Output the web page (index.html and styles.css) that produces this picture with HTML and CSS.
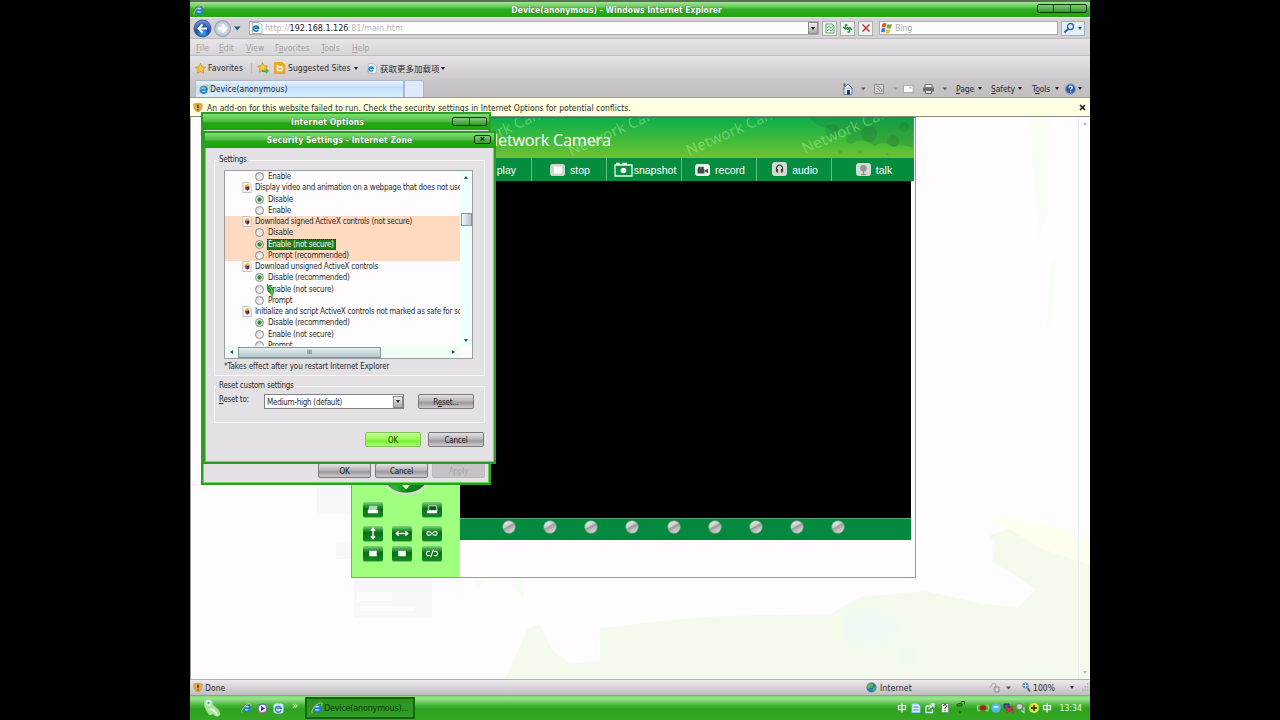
FILE: index.html
```html
<!DOCTYPE html>
<html lang="en">
<head>
<meta charset="UTF-8">
<title>Device(anonymous) - Windows Internet Explorer</title>
<link rel="stylesheet" href="styles.css">
</head>
<body>
<svg class="defs" width="0" height="0">
    <defs>
        <radialGradient id="blueBall" cx=".5" cy=".75" r=".7"><stop offset="0" stop-color="#39b4f0"/><stop offset=".5" stop-color="#1c50b0"/><stop offset="1" stop-color="#6f94d2"/></radialGradient>
        <radialGradient id="greyBall" cx=".5" cy=".5" r=".6"><stop offset="0" stop-color="#fafcff"/><stop offset="1" stop-color="#9fb0c4"/></radialGradient>
        <linearGradient id="knob" x1="0" y1="0" x2=".6" y2="1"><stop offset="0" stop-color="#f2f2f2"/><stop offset=".45" stop-color="#d0d0d0"/><stop offset=".55" stop-color="#a5a5a5"/><stop offset="1" stop-color="#d8d8d8"/></linearGradient>
        <linearGradient id="wheel" x1="0" y1="0" x2="1" y2="0"><stop offset="0" stop-color="#0b6b14"/><stop offset=".3" stop-color="#35b53a"/><stop offset=".5" stop-color="#118a20"/><stop offset="1" stop-color="#0a6312"/></linearGradient>
    </defs>
    <symbol id="ie" viewBox="0 0 12 12">
        <path d="M9.600 7.800a3.600 3.600 0 1 1 .2-2.600L9.600 6.300H4" fill="#bfe6f6" stroke="#1f7fcb" stroke-width="2"/>
        <path d="M1.200 11C-.6 9 5 1.500 9.500.8c2-.2 1.700 1.600.8 3" fill="none" stroke="#e3c04a" stroke-width="1"/>
    </symbol>
    <symbol id="iepage" viewBox="0 0 12 12">
        <path d="M1.500.5H8l3 3v8H1.500z" fill="#fff" stroke="#97a0a8" stroke-width=".8"/>
        <path d="M7.400 7.700a2.600 2.600 0 1 1 .2-1.600H3.500" fill="none" stroke="#1a77b4" stroke-width="1.600"/>
        <path d="M1 9.500C1 7 5 3 8.600 3" fill="none" stroke="#4aa7cf" stroke-width=".8"/>
    </symbol>
    <symbol id="star" viewBox="0 0 12 12"><path d="M6 .5l1.600 3.700 4 .4-3 2.700.9 4L6 9.200l-3.500 2.100.9-4-3-2.700 4-.4z" fill="#f9c63c" stroke="#c98a1d" stroke-width=".8"/></symbol>
    <symbol id="shield" viewBox="0 0 12 12">
        <path d="M6 .5c2 1 3.500 1 5 1C11.800 7 9.500 10 6 11.500 2.500 10 .2 7 1 1.500c1.500 0 3 0 5-1z" fill="#e4ad4c" stroke="#a87b38" stroke-width=".6"/>
        <path d="M6 2.500v4.500M6 8v1.700" stroke="#5d3608" stroke-width="1.800"/>
    </symbol>
    <symbol id="doc" viewBox="0 0 10 12">
        <path d="M.5.500H7l2.500 2.500v8.500H.5z" fill="#fffdf5" stroke="#a9a9a9" stroke-width=".8"/>
        <path d="M2.500 3.500l4-1.500 1 3-4 1.500z" fill="#e8b93c"/><path d="M2.500 5.500l2.500-.5 1 4.500-2.500-1z" fill="#b3344a"/><path d="M5 5.500l2.500-1V8L5.500 9.500z" fill="#2b2350"/>
    </symbol>
    <symbol id="knobIcon" viewBox="0 0 14 14"><circle cx="7" cy="7" r="6.300" fill="url(#knob)" stroke="#6f9f80" stroke-width=".6"/><path d="M2.500 9l9-4" stroke="#9a9a9a" stroke-width="1.300"/></symbol>
    <symbol id="zhong" viewBox="0 0 10 10"><path d="M1.500 2.700h7v3.800h-7zM5 .5v9" fill="none" stroke="#e6f3ff" stroke-width="1.300"/></symbol>
</svg>

<div class="screen">
    <div class="titlebar">
        <svg class="title-icon" width="12" height="12"><use href="#ie"/></svg>
        <span>Device(anonymous) - Windows Internet Explorer</span>
        <div class="win-buttons"><i></i><i></i><i></i></div>
    </div>

    <div class="nav">
        <svg width="55" height="19" viewBox="0 0 55 19">
            <circle cx="9.500" cy="9.500" r="8.500" fill="url(#blueBall)" stroke="#34497d" stroke-width=".8"/>
            <path d="M14 9.500H6M9.500 5.500l-4 4 4 4" fill="none" stroke="#fff" stroke-width="2"/>
            <circle cx="29.500" cy="9.500" r="8" fill="url(#greyBall)" stroke="#8a95a5" stroke-width=".8"/>
            <path d="M25 9.500h8M29.500 5.500l4 4-4 4" fill="none" stroke="#fff" stroke-width="2"/>
            <path d="M41 7.500h6.500l-3.200 4z" fill="#1e5d91"/>
        </svg>
        <div class="address">
            <svg width="12" height="12"><use href="#iepage"/></svg>
            <span>http://<b>192.168.1.126</b>:81/main.htm</span>
            <i class="drop"></i>
        </div>
        <div class="nav-btn"><svg width="10" height="11"><path d="M1 1h6l2 2v7H1zM2 5l2-1.500L6 5l2-1.500M2 8l2-1.500L6 8l2-1.500" fill="none" stroke="#57a964"/></svg></div>
        <div class="nav-btn"><svg width="11" height="11"><path d="M5.500 2H3.500v4M1 4l2.500 2L6 4M5.500 9h2V5M5 7l2.500-2.500L10 7" fill="none" stroke="#23933a" stroke-width="1.300"/></svg></div>
        <div class="nav-btn"><svg width="10" height="10"><path d="M1.500 1.500l7 7M8.500 1.500l-7 7" stroke="#c4343c" stroke-width="1.500"/></svg></div>
        <div class="search">
            <svg width="12" height="12"><path d="M1.500 1.500q2.500-1 4 0L4.500 5.500q-2-1-4 0z" fill="#d9572b"/><path d="M6.500 2q2 1 4.500 0l-1 4q-2.500 1-4.500 0z" fill="#69ab3c"/><path d="M.5 6.500q2-1 4 0l-1 4q-2-1-3.500 0z" fill="#3f7fcb"/><path d="M5.500 7q2 1 4 0l-1 4q-2 1-4 0z" fill="#f0bd35"/></svg>
            <span>Bing</span>
        </div>
        <div class="search-btn"><svg width="14" height="12"><circle cx="8.500" cy="4.500" r="3" fill="#e5f2ff" stroke="#2c5eaa" stroke-width="1.300"/><path d="M6.200 7L2.500 10.500" stroke="#2c5eaa" stroke-width="1.800"/></svg><i class="caret"></i></div>
    </div>

    <div class="menubar">
        <span class="m1"><u>F</u>ile</span><span class="m2"><u>E</u>dit</span><span class="m3"><u>V</u>iew</span><span class="m4">F<u>a</u>vorites</span><span class="m5"><u>T</u>ools</span><span><u>H</u>elp</span>
    </div>

    <div class="favbar">
        <svg width="11" height="11"><use href="#star"/></svg>
        <span class="fav-label">Favorites</span>
        <svg class="add-fav" width="12" height="12" viewBox="0 0 12 12"><use href="#star" width="11" height="11"/><path d="M5 8.200h4V6l3 3-3 3v-2H5z" fill="#43b53c"/></svg>
        <svg class="bing" width="12" height="12" viewBox="0 0 12 12"><path d="M0 0h8l3.500 3v9H0z" fill="#f2a521"/><path d="M3.500 3v5.500h4q2-2 0-3.500H3.500" fill="none" stroke="#fff" stroke-width="1.600"/></svg>
        <span class="sug-label">Suggested Sites</span><i class="caret"></i>
        <svg class="page-ico" width="10" height="11"><use href="#iepage"/></svg>
        <span class="cjk">获取更多加载项</span><i class="caret"></i>
    </div>

    <div class="tabrow">
        <div class="tab"><svg width="11" height="11"><use href="#ie"/></svg><span>Device(anonymous)</span></div>
        <div class="newtab"></div>
        <div class="commands">
            <svg width="115" height="14" viewBox="0 0 115 14">
                <path d="M1.500 7L7 2l5 5M3 6v6.500h8V6" fill="#dfeafc" stroke="#657fb0"/><path d="M2.500 1.500h2v3h-2z" fill="#47679c"/><path d="M6 8h3v4.500H6z" fill="#23375f"/>
                <path d="M20 5.500h4.500l-2.200 2.700z" fill="#555"/>
                <path d="M33.500 2.500h9v9h-9z" fill="#d6d6d6" stroke="#8a8a8a"/><path d="M35.500 9.500h1M35.500 6.500q3 0 3.500 3.200M35.500 4.200q5 .3 5.500 5.500" fill="none" stroke="#828282"/>
                <path d="M52.500 5.500H57l-2.200 2.700z" fill="#999"/>
                <path d="M62.500 3.500h9.500v7h-9.500z" fill="#fafafa" stroke="#adadad"/><path d="M68.500 5h2v1.500h-2z" fill="#d2a0a0"/>
                <path d="M84 2.500h7v3h-7z" fill="#eee" stroke="#777"/><path d="M82 5.500h11v4H82z" fill="#717171"/><path d="M84.500 8.500h6v3h-6z" fill="#ddd" stroke="#666"/>
                <path d="M101.500 5.500h4.500l-2.200 2.700z" fill="#555"/>
            </svg>
            <span class="c1"><u>P</u>age</span><i class="caret"></i>
            <span class="c2"><u>S</u>afety</span><i class="caret"></i>
            <span class="c3">T<u>o</u>ols</span><i class="caret"></i>
            <svg class="help" width="11" height="12"><circle cx="5.500" cy="6" r="5" fill="#315caa" stroke="#8097c2"/><path d="M3.800 4.600q.2-1.500 1.800-1.500t1.700 1.400q0 .8-1.700 1.700v1M5.600 8.300v1.300" fill="none" stroke="#fff" stroke-width="1.200"/></svg><i class="caret"></i>
        </div>
    </div>

    <div class="infobar">
        <svg width="10" height="11"><use href="#shield"/></svg>
        <span>An add-on for this website failed to run. Check the security settings in Internet Options for potential conflicts.</span>
        <svg class="close" width="7" height="7"><path d="M1 1l5 5M6 1L1 6" stroke="#111" stroke-width="1.500"/></svg>
    </div>

    <div class="content">
        <!-- faint landscape behind the page -->
        <svg class="landscape" width="899" height="562" viewBox="191 117 899 562">
            <path d="M505 679L516 655 528 628 540 624 552 650 570 664 600 660 600 628 682 619 720 616 830 614 860 597 925 591 985 604 1018 607 1036 590 1010 572 992 562 994 545 990 535 1010 528 1090 548 1090 679z" fill="#f4fbec"/>
            <ellipse cx="870" cy="627" rx="28" ry="20" fill="#f0faf2"/><circle cx="908" cy="656" r="8" fill="#effaf1"/>
            <path d="M985 514L1040 524 1090 538 1090 565 1040 548z" fill="#fdfeee"/>
            <path d="M486 541L492 541 488 575 478 590 470 568zM515 541L522 541 524 600 512 585z" fill="#f8fdf3"/>
            <path d="M1030 117h20l-3 95-8 28zM1050 260h6l-5 70h-4z" fill="#f9fdf5"/>
            <path d="M317 486h34v28h-34zM336 543h16v16h-16zM354 579h78v39h-78z" fill="#f8f6f8"/>
            <path d="M357 592h35v9h-35zM360 606h55v5h-55z" fill="#fdfbfd"/>
        </svg>
        <div class="camera">
            <svg class="banner" width="562" height="40" viewBox="0 0 562 40">
                <path d="M458 0h103v30q-12-5-19-1-11-7-19-1-11-8-19-5 0-8-11-10-12 2-16-3-14-1-19-10z" fill="#23823a" opacity=".35"/>
                <g fill="#155f28" opacity=".2"><circle cx="480" cy="13" r="7"/><circle cx="499" cy="21" r="5"/><circle cx="517" cy="16" r="8"/><circle cx="541" cy="23" r="6"/><circle cx="552" cy="9" r="5"/><circle cx="489" cy="34" r="2"/><circle cx="508" cy="34" r="2"/><circle cx="535" cy="36" r="1.500"/></g>
                <g class="watermark">
                    <text transform="translate(105 38) rotate(-24)">Network Camera</text>
                    <text transform="translate(219 38) rotate(-24)">Network Camera</text>
                    <text transform="translate(337 38) rotate(-24)">Network Camera</text>
                    <text transform="translate(453 36) rotate(-24)">Network Camera</text>
                </g>
                <text class="brand" x="134" y="28">Network Camera</text>
            </svg>
            <div class="toolbar">
                <div class="tool play"><span>play</span></div>
                <div class="tool"><svg width="15" height="12"><rect width="15" height="12" rx="2.500" fill="#d1d6cf"/><path d="M4 2.500h8v7H4z" fill="#fff"/></svg><span>stop</span></div>
                <div class="tool snap"><svg width="19" height="15"><path d="M1 3h17v11H1zM2 1.500h4M8 1.500h5" fill="none" stroke="#e7fff0" stroke-width="1.300"/><circle cx="9.500" cy="8.500" r="2.800" fill="#fff"/></svg><span>snapshot</span></div>
                <div class="tool"><svg width="15" height="12"><rect width="15" height="12" rx="3" fill="#f0f5ef"/><path d="M2.500 5h7v4.500h-7zM10 6.500l3-1.800v4.600l-3-1.800z" fill="#444c46"/><circle cx="4.500" cy="4" r="1.500" fill="#444c46"/><circle cx="7.500" cy="4" r="1.500" fill="#444c46"/></svg><span>record</span></div>
                <div class="tool"><svg width="15" height="15"><rect width="15" height="14" rx="3" fill="#d5d8d3"/><path d="M4.500 9.500V6q.5-3 3-3t3 3v3.500" fill="none" stroke="#393d39" stroke-width="1.200"/><path d="M5.300 7v3.500M9.700 7v3.500" stroke="#393d39" stroke-width="1.600"/></svg><span>audio</span></div>
                <div class="tool talk"><svg width="15" height="13"><rect width="15" height="13" rx="3" fill="#d5dbd5"/><circle cx="7.500" cy="5.300" r="3.300" fill="#929792"/><path d="M7.500 7v4M5 11.500h5" stroke="#929792" stroke-width="1.300"/></svg><span>talk</span></div>
            </div>
            <div class="main">
                <div class="ptz">
                    <svg class="wheel" width="56" height="56"><circle cx="28" cy="28" r="27" fill="url(#wheel)" stroke="#d4ddd0" stroke-width="2.500"/><path d="M23.500 45.500h9L28 50.500z" fill="#fff3c8"/></svg>
                    <div class="pads">
                        <svg viewBox="0 0 20 16"><path d="M4.500 8.500h11v3.500h-11z" fill="#fff"/><path d="M6 4h9l-1 4.500H5z" fill="#b4d4b4"/></svg>
                        <i></i>
                        <svg viewBox="0 0 20 16"><path d="M4.500 9h11v3h-11z" fill="#fff"/><path d="M6.500 4h8l1 5h-9z" fill="#1d4c24" stroke="#d4efd4"/></svg>
                        <svg viewBox="0 0 20 16"><path d="M10 3v10M7.800 5L10 2.500 12.200 5M7.800 11L10 13.500l2.200-2.500" fill="none" stroke="#fff" stroke-width="1.500"/></svg>
                        <svg viewBox="0 0 20 16"><path d="M4 8h12M6.500 5.500L4 8l2.500 2.500M13.500 5.500L16 8l-2.500 2.500" fill="none" stroke="#fff" stroke-width="1.500"/></svg>
                        <svg viewBox="0 0 20 16"><path d="M9.500 8q-1-2-3-2t-2 2 2 2 3-2h1q1-2 3-2t2 2-2 2-3-2" fill="none" stroke="#e4ffe4" stroke-width="1.300"/></svg>
                        <svg viewBox="0 0 20 16"><path d="M6 5h8v6H6z" fill="#fff"/></svg>
                        <svg viewBox="0 0 20 16"><path d="M6 5h8v6H6z" fill="#fff"/></svg>
                        <svg viewBox="0 0 20 16"><path d="M8 6q-4-1-4 2t4 2M8.500 12l3-8M12 6q4-1 4 2t-4 2" fill="none" stroke="#e4ffe4" stroke-width="1.300"/></svg>
                    </div>
                </div>
                <div class="view">
                    <div class="video"></div>
                    <div class="presets">
                        <svg><use href="#knobIcon"/></svg><svg><use href="#knobIcon"/></svg><svg><use href="#knobIcon"/></svg><svg><use href="#knobIcon"/></svg><svg><use href="#knobIcon"/></svg><svg><use href="#knobIcon"/></svg><svg><use href="#knobIcon"/></svg><svg><use href="#knobIcon"/></svg><svg><use href="#knobIcon"/></svg>
                    </div>
                </div>
            </div>
        </div>
        <div class="page-scroll"><i class="up"></i><i class="down"></i></div>
    </div>

    <div class="statusbar">
        <svg width="10" height="11"><use href="#shield"/></svg>
        <span class="done">Done</span>
        <svg width="11" height="11"><circle cx="5.500" cy="5.500" r="5" fill="#2b7fb0"/><path d="M3 1.500q3-1 4 1T5 5.500 2 7 .8 4.500zM7 6l3-1q0 3-2.500 4.500z" fill="#62b755"/></svg>
        <span class="zone">Internet</span>
        <svg class="lock" width="24" height="11"><path d="M1 6q2-5 4-5t2 3L4 7" fill="none" stroke="#a6a6a6"/><path d="M6 5h4v5H6z" fill="#ddd" stroke="#888"/><path d="M17 4.500h5L19.500 7.500z" fill="#555"/></svg>
        <svg class="mag" width="10" height="11"><circle cx="3.500" cy="3.500" r="3" fill="#4a8ed0"/><path d="M3.500 1.500v4M1.500 3.500h4" stroke="#fff"/><path d="M5.500 6L8 9.500" stroke="#555" stroke-width="1.500"/></svg>
        <span class="pct">100%</span><i class="caret"></i>
        <svg class="grip" width="9" height="9"><path d="M7 1h1.500M4.500 4H6M7 4h1.500M2 7h1.500M4.500 7H6M7 7h1.500" stroke="#b0b0b0" stroke-width="1.500"/></svg>
    </div>

    <div class="taskbar">
        <svg class="start" width="22" height="21"><path d="M3 5q0-4 5-4 4 1 4 6l5 4q4 5 1 7-3 2-6-2-4 3-5-1-4-5-4-10z" fill="#a8e29b"/><circle cx="7.500" cy="5" r="3" fill="#d4f3e8"/><circle cx="7.500" cy="5" r="1.200" fill="#4caf6a"/><path d="M9 11q5 1 7 6" fill="none" stroke="#e2f8dc" stroke-width="2"/></svg>
        <svg width="11" height="12"><use href="#ie"/></svg>
        <svg width="11" height="11"><circle cx="5.500" cy="5.500" r="4.500" fill="#f4f4ff" stroke="#6672b4" stroke-width="1.500"/><path d="M4 3l4 2.500L4 8z" fill="#323b9a"/><path d="M1.500 9q3 2 6 0" stroke="#db6b3a" fill="none"/></svg>
        <svg width="11" height="11"><rect x=".5" y=".5" width="10" height="10" rx="3" fill="#d2ebfa"/><path d="M8 7.500a3 3 0 1 1 .2-2.200H3.500" fill="none" stroke="#3a86c2" stroke-width="1.500"/></svg>
        <span class="more">»</span>
        <div class="task"><svg width="12" height="12"><use href="#ie"/></svg><span>Device(anonymous)...</span></div>
        <div class="tray">
            <svg width="170" height="14" viewBox="0 0 170 14">
                <use href="#zhong" x="0" y="2" width="10" height="10"/>
                <path d="M15 3h6l2 2v6.500h-8z" fill="#e5f1ff" stroke="#8ac5ff"/><path d="M16.500 6h5M16.500 9h5" stroke="#3a76aa"/>
                <path d="M29 5h5M29 5v6.500h6.500V8" fill="none" stroke="#d9f1ff" stroke-width="1.300"/><path d="M31.500 8.500L37 3M33.500 3H37v3.500" stroke="#d9f1ff" stroke-width="1.300" fill="none"/>
                <path d="M44.500 2.500h7v9h-7z" fill="#fafff2" stroke="#7b8a72"/><path d="M46.500 5q.2-1.500 1.500-1.500t1.500 1.300T48 7v1M48 9v1.300" fill="none" stroke="#222"/>
                <path d="M61.500 2.500h3v-2h3v3M60 3h5v2h-5z" fill="none" stroke="#1d4d12" stroke-width=".9"/><path d="M61.500 10.500h3L63 12z" fill="#143d0d"/>
                <path d="M81.500 3.500q-2.500 3.500 0 7M90.500 3.500q2.500 3.500 0 7" fill="none" stroke="#a7efa0"/><path d="M82 4h8v6h-8z" fill="#39d541"/><ellipse cx="86" cy="7" rx="3.500" ry="2.800" fill="#b31c1c"/>
                <circle cx="99" cy="7" r="4.800" fill="#5ab4ec"/><path d="M96 6q3-3 6 0-3 2-6 0z" fill="#d4f0ff"/>
                <path d="M107 3h5v4h-5zM110 6h5v4h-5z" fill="#4f5791" stroke="#28306a"/><path d="M109 6l8 6M116 5l-7 7" stroke="#d13a3e" stroke-width="2"/>
                <circle cx="122.500" cy="5.500" r="3.200" fill="#ccc" stroke="#6d7d6c"/><path d="M124 9.500l3 2V6" fill="none" stroke="#bfd0bb" stroke-width="1.300"/>
                <circle cx="137" cy="7" r="5" fill="#e9e739"/><path d="M137 4v6M134 7h6" stroke="#393f0a" stroke-width="1.800"/>
                <use href="#zhong" x="145" y="2" width="10" height="10"/>
            </svg>
            <span>13:34</span>
        </div>
    </div>

    <div class="dialog options">
        <div class="dialog-title"><span>Internet Options</span><div class="win-buttons"><i></i><i></i></div></div>
        <div class="dialog-foot"><button>OK</button><button>Cancel</button><button class="disabled">Apply</button></div>
    </div>

    <div class="dialog security">
        <div class="dialog-title"><span>Security Settings - Internet Zone</span><div class="win-buttons x"><i>×</i></div></div>
        <fieldset class="settings">
            <legend>Settings</legend>
            <div class="listbox">
                <div class="list-row">
                    <ul class="list">
                        <li><i></i>Enable</li>
                        <li class="head"><svg><use href="#doc"/></svg>Display video and animation on a webpage that does not use</li>
                        <li><i class="on"></i>Disable</li>
                        <li><i></i>Enable</li>
                        <li class="head hot"><svg><use href="#doc"/></svg>Download signed ActiveX controls (not secure)</li>
                        <li class="hot"><i></i>Disable</li>
                        <li class="hot"><i class="on"></i><span class="selected">Enable (not secure)</span></li>
                        <li class="hot"><i></i>Prompt (recommended)</li>
                        <li class="head"><svg><use href="#doc"/></svg>Download unsigned ActiveX controls</li>
                        <li><i class="on"></i>Disable (recommended)</li>
                        <li><i></i>Enable (not secure)</li>
                        <li><i></i>Prompt</li>
                        <li class="head"><svg><use href="#doc"/></svg>Initialize and script ActiveX controls not marked as safe for sc</li>
                        <li><i class="on"></i>Disable (recommended)</li>
                        <li><i></i>Enable (not secure)</li>
                        <li><i></i>Prompt</li>
                    </ul>
                    <div class="vscroll"><i class="up"></i><b></b><i class="down"></i></div>
                </div>
                <div class="hscroll"><i class="left"></i><b>III</b><i class="right"></i></div>
            </div>
            <p>*Takes effect after you restart Internet Explorer</p>
        </fieldset>
        <fieldset class="reset">
            <legend>Reset custom settings</legend>
            <label><u>R</u>eset to:</label>
            <div class="select"><span>Medium-high (default)</span><i class="drop"></i></div>
            <button>R<u>e</u>set...</button>
        </fieldset>
        <div class="dialog-foot"><button class="primary">OK</button><button>Cancel</button></div>
    </div>

    <svg class="cursor" width="10" height="16"><path d="M1 1q8 3 7 8 0 3-2 6Q5 10 2 9 0 5 1 1z" fill="#2c9a34"/><path d="M2 2q5 4 4 11" stroke="#84d472" fill="none"/></svg>
</div>
</body>
</html>
```

FILE: styles.css
```css
* {
    box-sizing: border-box;
}
body {
    margin: 0;
    background-color: #000;
    font-family: "DejaVu Sans Condensed", "Noto Sans", sans-serif;
    font-size: 8px;
    letter-spacing: -0.25px;
    color: #2c2c2c;
    overflow: hidden;
}
svg {
    display: block;
    flex: none;
}
span, label, p {
    white-space: nowrap;
}
.defs {
    position: absolute;
}
.screen {
    position: relative;
    display: flex;
    flex-direction: column;
    width: 900px;
    height: 720px;
    margin: 0 auto;
    background-color: #dddbdd;
}

/* title bar */
.titlebar {
    height: 17px;
    display: flex;
    align-items: center;
    padding: 0 3px;
    border-top: 2px solid #587052;
    background: linear-gradient(#9ee693 0, #6dcc60 30%, #2fae20 50%, #20a50f 100%);
    color: #fff;
    font-size: 8.5px;
    font-weight: bold;
    letter-spacing: 0.02px;
    text-shadow: 0 0 1px #195c10;
}
.titlebar span {
    flex: 1;
    text-align: center;
    padding-right: 9px;
}
.win-buttons {
    display: flex;
    width: 50px;
    height: 9px;
    margin-top: -2px;
    border: 1px solid #083a05;
    border-radius: 2px;
    background: linear-gradient(#83cb77, #319c28);
}
.win-buttons i {
    flex: 1;
    border-left: 1px solid #16550f;
}
.win-buttons i:first-child {
    border-left: none;
}

/* navigation */
.nav {
    height: 22px;
    display: flex;
    align-items: center;
    padding: 0 4px 0 3px;
    border-top: 1px solid #f2fff0;
    border-bottom: 1px solid #bbb9bb;
    background-color: #d4d2d4;
}
.address {
    display: flex;
    align-items: center;
    width: 570px;
    height: 14px;
    margin-left: 1px;
    padding-left: 1px;
    background-color: #fff;
    border: 1px solid #aaa;
    font-size: 9px;
    letter-spacing: -0.03px;
    color: #b5b3b5;
}
.address span {
    flex: 1;
    padding-left: 2px;
}
.address b {
    color: #222;
    font-weight: normal;
}
.drop {
    width: 10px;
    height: 12px;
    border: 1px solid #8b8b8b;
    background: linear-gradient(#eee, #aaa);
    display: flex;
    align-items: center;
    justify-content: center;
}
.drop::after,
.caret {
    content: "";
    width: 0;
    height: 0;
    flex: none;
    border: 2px solid transparent;
    border-top: 3px solid #222;
    border-bottom: none;
}
.nav-btn {
    width: 15px;
    height: 15px;
    margin-left: 3px;
    display: flex;
    align-items: center;
    justify-content: center;
    border: 1px solid #aab0ac;
    background-color: #f1f3f1;
}
.address + .nav-btn {
    margin-left: 3px;
}
.search {
    display: flex;
    align-items: center;
    width: 179px;
    height: 14px;
    margin-left: 6px;
    padding-left: 1px;
    border: 1px solid #aaa;
    background-color: #fff;
    color: #aaa;
    font-size: 9px;
}
.search span {
    padding-left: 2px;
}
.search-btn {
    display: flex;
    align-items: center;
    gap: 2px;
    width: 24px;
    height: 15px;
    margin-left: 3px;
    border: 1px solid #9dafc8;
    background-color: #e6f0fb;
}
.search-btn .caret {
    border-top-color: #285b95;
}

.menubar {
    height: 17px;
    display: flex;
    align-items: center;
    padding: 2px 0 0 6px;
    background: linear-gradient(#e7e5e7, #d6d4d6);
    border-bottom: 1px solid #c1bfc1;
    color: #a5a3a5;
    font-size: 8.5px;
    letter-spacing: 0;
}
.m1 { width: 23px; }
.m2 { width: 27px; }
.m3 { width: 29px; }
.m4 { width: 46px; }
.m5 { width: 31px; }

.favbar {
    height: 23px;
    display: flex;
    align-items: center;
    padding: 1px 0 0 5px;
    background: linear-gradient(#e4e2e4, #cccacc);
    font-size: 8.5px;
    letter-spacing: 0.05px;
}
.fav-label {
    width: 44px;
    margin-left: 2px;
    border-right: 1px solid #b4b2b4;
}
.add-fav {
    margin-left: 5px;
}
.bing {
    margin: 0 2px 0 5px;
}
.sug-label {
    width: 66px;
}
.page-ico {
    margin: 0 3px 0 9px;
}
.cjk {
    width: 61px;
    font-family: "Noto Sans CJK SC", sans-serif;
    letter-spacing: 0;
}

/* tabs and command bar */
.tabrow {
    height: 19px;
    display: flex;
    align-items: flex-end;
    padding-left: 5px;
    background: linear-gradient(#c9c7c9, #c0bec0);
    border-bottom: 1px solid #989caa;
    font-size: 8.5px;
    letter-spacing: 0.05px;
}
.tab {
    display: flex;
    align-items: center;
    gap: 1px;
    width: 209px;
    height: 17px;
    padding-left: 2px;
    background: linear-gradient(#e8f4ff, #c4defc 40%, #d9eeff);
    border: 1px solid #aeb7cb;
    border-bottom: none;
}
.newtab {
    width: 20px;
    height: 17px;
    margin-left: 0;
    border: 1px solid #aeb7cb;
    border-bottom: none;
    background-color: #dfebfc;
}
.commands {
    display: flex;
    align-items: center;
    height: 17px;
    margin: 0 8px 0 auto;
    letter-spacing: -0.1px;
}
.c1 { width: 22px; }
.c2 { width: 27px; margin-left: 9px; }
.c3 { width: 23px; margin-left: 10px; }
.help {
    margin: 0 2px 0 6px;
}

.infobar {
    height: 19px;
    display: flex;
    align-items: center;
    padding: 1px 4px 0 3px;
    background-color: #ffffe1;
    border-bottom: 1px solid #8d8d86;
    font-size: 8.5px;
    letter-spacing: 0.04px;
}
.infobar span {
    flex: 1;
    padding-left: 4px;
}

/* web page */
.content {
    position: relative;
    display: flex;
    flex: 1;
    min-height: 0;
    background-color: #fefcfe;
    border-left: 1px solid #999;
}
.landscape {
    position: absolute;
    left: 0;
    top: 0;
}
.camera {
    position: relative;
    display: flex;
    flex-direction: column;
    width: 565px;
    height: 461px;
    margin-left: 160px;
    border: 1px solid #83a693;
    border-top-color: #26814a;
    background-color: #fefcfe;
}
.banner {
    background: linear-gradient(#0cae4c, #6bc52e);
}
.watermark {
    fill: #d9ffc0;
    fill-opacity: 0.38;
    font-family: "Open Sans", sans-serif;
    font-size: 15px;
    letter-spacing: 0.2px;
}
.brand {
    fill: #fff;
    font-family: "Open Sans", sans-serif;
    font-size: 16.3px;
    letter-spacing: -0.25px;
}
.toolbar {
    display: flex;
    width: 562px;
    height: 23px;
    background-color: #048c3f;
    font-family: "Liberation Sans", sans-serif;
    font-size: 10.5px;
    letter-spacing: 0;
    color: #fff;
}
.tool {
    display: flex;
    align-items: center;
    justify-content: center;
    gap: 5px;
    width: 75px;
    padding-left: 2px;
    border-left: 1px solid #61bb81;
}
.play {
    width: 179px;
    justify-content: flex-end;
    padding-right: 15px;
    border: none;
}
.snap {
    gap: 1px;
}
.talk {
    flex: 1;
}
.main {
    display: flex;
    flex: 1;
}
.ptz {
    width: 108px;
    background-color: #a0ff7e;
    display: flex;
    flex-direction: column;
    align-items: center;
    padding: 258px 0 0 0;
}
.pads {
    display: grid;
    grid-template-columns: repeat(3, 20px);
    grid-template-rows: 16px 15px 15px;
    column-gap: 9.5px;
    row-gap: 5px;
    padding-top: 10px;
    margin-right: 8px;
}
.pads svg {
    width: 20px;
    height: 16px;
    border-radius: 2px;
    background: linear-gradient(#8bd18b 0, #2f9c3d 25%, #066f13 45%, #118a22);
    border-bottom: 1px solid #8bb08b;
}
.pads svg:nth-child(-n+3) {
    margin-top: -3px;
}
.view {
    width: 451px;
}
.video {
    height: 337px;
    background-color: #000;
}
.presets {
    display: flex;
    justify-content: space-between;
    height: 22px;
    padding: 1px 66px 0 42px;
    border-top: 1px solid #59a878;
    background-color: #048a3e;
}
.presets svg {
    width: 14px;
    height: 14px;
}
.page-scroll {
    display: flex;
    flex-direction: column;
    justify-content: space-between;
    align-items: center;
    position: relative;
    width: 12px;
    margin-left: auto;
    padding: 5px 0;
    border-left: 1px solid #e9eef3;
}
.up, .down, .left, .right {
    width: 0;
    height: 0;
    border: 2.5px solid transparent;
}
.up { border-bottom: 3px solid #3d6157; border-top: none; }
.down { border-top: 3px solid #3d6157; border-bottom: none; }
.left { border-right: 3px solid #2d5147; border-left: none; }
.right { border-left: 3px solid #2d5147; border-right: none; }
.page-scroll i {
    opacity: 0.4;
}

/* status bar and task bar */
.statusbar {
    height: 17px;
    display: flex;
    align-items: center;
    padding: 0 1px 0 3px;
    border-top: 1px solid #b2b0b2;
    border-bottom: 1px solid #999;
    background: linear-gradient(#ebe9eb, #bfbdbf);
    font-size: 8.5px;
    letter-spacing: 0.05px;
}
.done {
    width: 663px;
    padding-left: 2px;
}
.zone {
    padding-left: 3px;
    width: 112px;
    letter-spacing: 0.2px;
}
.lock, .mag {
    margin-right: 9px;
}
.mag {
    margin-right: 1px;
}
.pct {
    width: 37px;
}
.grip {
    margin-left: auto;
}
.taskbar {
    height: 24px;
    display: flex;
    align-items: center;
    padding-left: 11px;
    background: linear-gradient(#81dc76 0, #9be290 12%, #46b637 38%, #2fa21f 55%, #34a725 100%);
}
.start {
    margin-right: 18px;
}
.start ~ svg {
    margin-right: 5px;
}
.more {
    color: #d9ffd0;
    font-size: 11px;
    margin: -6px 0 0 3px;
    width: 13px;
}
.task {
    display: flex;
    align-items: center;
    gap: 1px;
    width: 110px;
    height: 22px;
    padding-left: 4px;
    border: 2px solid #16640e;
    background: linear-gradient(#2c9220, #319e27);
    color: #0d3508;
    font-size: 9px;
    letter-spacing: -0.22px;
}
.tray {
    display: flex;
    align-items: center;
    margin: 0 8px 0 auto;
    color: #eaffe5;
    font-size: 8.5px;
    letter-spacing: 0.1px;
}
.tray svg {
    margin-right: -8px;
}

/* dialogs */
.dialog {
    position: absolute;
    display: flex;
    flex-direction: column;
    border: 2px solid #2d9c25;
    background-color: #e3e1e3;
    box-shadow: inset 1px 0 #6bd55e, inset -1px -1px #6bd55e;
}
.dialog-title {
    display: flex;
    align-items: center;
    flex: none;
    background: linear-gradient(#83dd78 0, #50bf44 45%, #25a916 55%, #1ca30b);
    color: #fff;
    font-size: 8.5px;
    font-weight: bold;
    letter-spacing: 0.1px;
    text-shadow: 0 0 1px #195c10;
}
.dialog-title span {
    flex: 1;
    text-align: center;
}
.options {
    left: 11px;
    top: 112px;
    width: 290px;
    height: 373px;
}
.options .dialog-title {
    height: 16px;
    padding: 0 2px 1px 0;
}
.options .win-buttons {
    width: 35px;
    margin-top: 0;
}
.security {
    left: 13px;
    top: 131px;
    width: 293px;
    height: 333px;
}
.security .dialog-title {
    height: 15px;
    padding: 0 3px 2px 0;
}
.win-buttons.x {
    width: 17px;
    margin-top: 0;
    font: bold 7px/7px "DejaVu Sans", sans-serif;
    color: #063f04;
    text-align: center;
}
.dialog-foot {
    display: flex;
}
.options .dialog-foot {
    gap: 4px;
    margin: auto 4px 5px auto;
}
button {
    width: 56px;
    height: 15px;
    padding: 1px 0 0;
    border: 1px solid #7b797b;
    border-radius: 2px;
    background: linear-gradient(#e4e2e4, #b9b7b9 45%, #9b999b 60%, #cecccf);
    font: inherit;
    letter-spacing: -0.2px;
    color: #222;
}
.options button {
    width: 53px;
}
.primary {
    border-color: #81c65d;
    background: linear-gradient(#c3ff8e, #92fb52 50%, #79ee38 60%, #a4ff6b);
    color: #174d0b;
}
.options .disabled {
    color: #a8a6a8;
    border-color: #bbb;
    background: #c5c3c5;
}
fieldset {
    margin: 0;
    padding: 0;
    min-width: 0;
    border: 1px solid #f8f6f8;
}
legend {
    margin-left: 2px;
    padding: 0 2px;
    line-height: 10px;
}
.settings {
    margin: 7px 9px 0 9px;
    height: 221px;
}
.listbox {
    width: 249px;
    height: 189px;
    margin: 5px 0 0 9px;
    border: 1px solid #9b9d9e;
    background-color: #fefcfe;
}
.list-row {
    display: flex;
    height: 175px;
    overflow: hidden;
}
.list {
    width: 235px;
    margin: 0;
    padding: 0;
    list-style: none;
    overflow: hidden;
    font-size: 8px;
    white-space: nowrap;
}
.list li {
    display: flex;
    align-items: center;
    height: 11.25px;
    padding-left: 30px;
}
.list .head {
    padding-left: 17px;
}
.list svg {
    width: 10px;
    height: 11px;
    margin-right: 3px;
}
.list i {
    flex: none;
    width: 9px;
    height: 9px;
    margin-right: 4px;
    border: 1px solid #8b8b8b;
    border-radius: 50%;
    background: linear-gradient(135deg, #d7d5d7, #fff);
}
.list i.on {
    background: radial-gradient(#178329 0, #35a245 38%, #e5efe5 50%);
}
.list .hot {
    background-color: #ffdac0;
}
.selected {
    height: 11px;
    line-height: 10px;
    margin-left: -1px;
    padding: 0 1px 0 0;
    background-color: #1d7a1a;
    border: 1px dotted #124b0e;
    color: #fff;
}
.vscroll {
    display: flex;
    flex-direction: column;
    align-items: center;
    width: 12px;
    padding: 5px 0 4px;
    background-color: #effffa;
}
.vscroll b {
    width: 11px;
    height: 13px;
    margin: 34px 0 auto;
    border: 1px solid #8297a5;
    background: linear-gradient(90deg, #f1f5fb, #b4c1cc);
}
.hscroll {
    display: flex;
    align-items: center;
    width: 235px;
    height: 12px;
    padding: 0 5px;
    background-color: #effff5;
}
.hscroll b {
    width: 143px;
    height: 11px;
    margin: 0 auto 0 5px;
    border: 1px solid #81969e;
    background: linear-gradient(#e6eff1, #b5c4ca);
    font-size: 6px;
    font-weight: normal;
    line-height: 8px;
    text-align: center;
    letter-spacing: 0;
}
.settings p {
    margin: 3px 0 0 9px;
    line-height: 10px;
    letter-spacing: -0.1px;
}
.reset {
    display: flex;
    margin: 5px 9px 0 9px;
    height: 42px;
}
.reset label {
    width: 45px;
    margin: 4px 0 0 4px;
    line-height: 10px;
}
.select {
    display: flex;
    align-items: center;
    width: 140px;
    height: 15px;
    margin: 3px 14px 0 0;
    padding: 0 0 0 2px;
    border: 1px solid #838183;
    background-color: #fff;
}
.select span {
    flex: 1;
    padding-top: 1px;
}
.reset button {
    margin-top: 3px;
}
.security .dialog-foot {
    gap: 7px;
    margin: auto 10px 15px auto;
}
.cursor {
    position: absolute;
    left: 76px;
    top: 283px;
}
```
